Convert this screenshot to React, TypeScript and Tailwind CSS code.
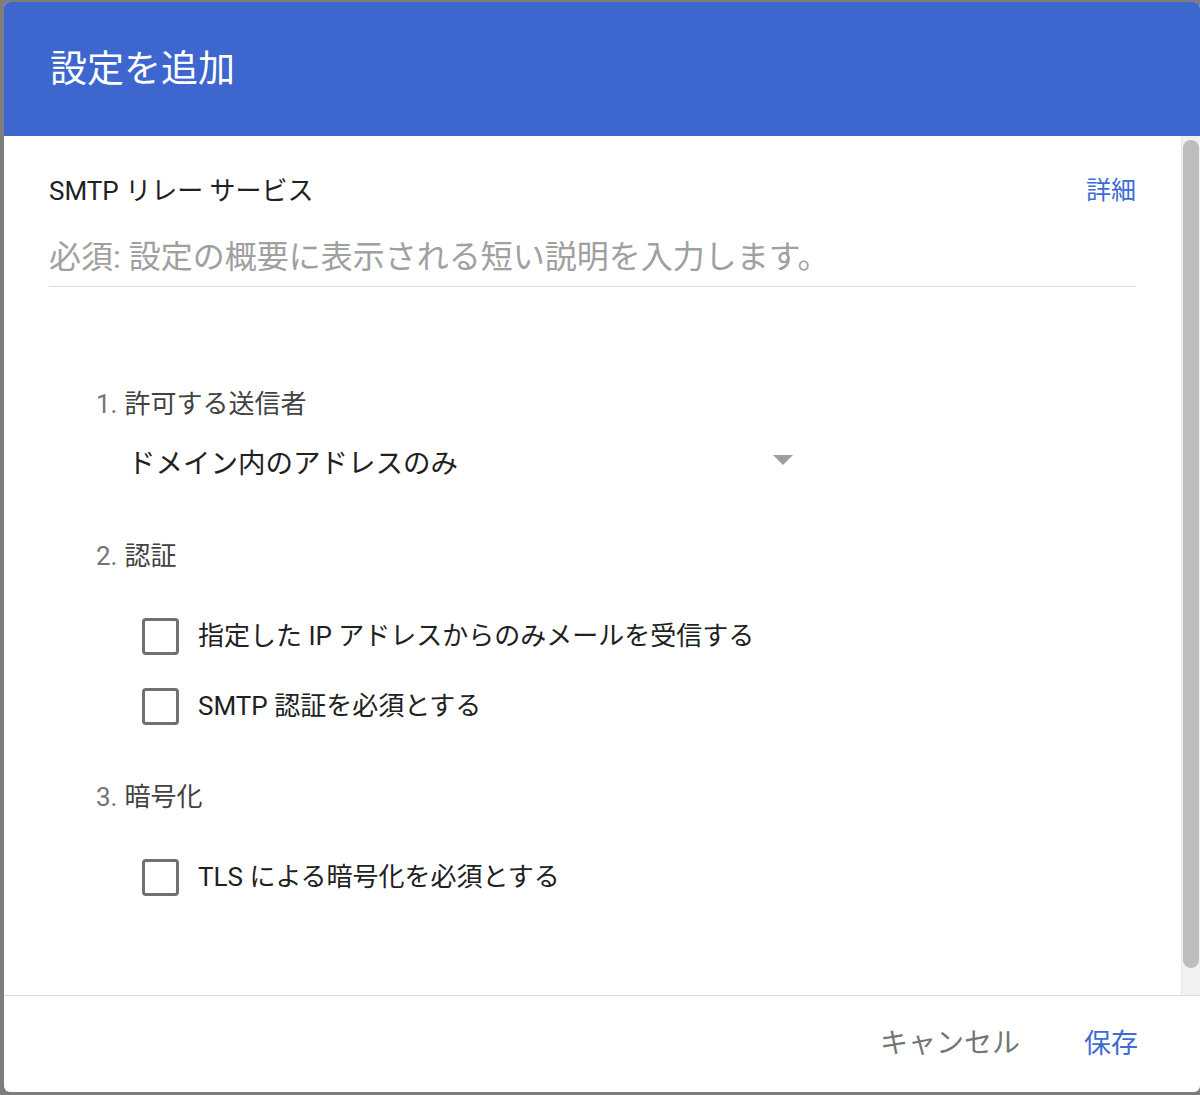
import React from 'react';

const Checkbox: React.FC<{ label: string; className?: string }> = ({ label, className }) => (
    <label className={`flex items-center h-10 ml-[93px] ${className ?? ''}`}>
        <span className="w-[37px] h-[37px] border-[3px] border-[#717171] rounded-[4px] shrink-0" />
        <span className="ml-[19px] text-[26px] leading-10 text-[#212121]">{label}</span>
    </label>
);

const SectionLabel: React.FC<{ num: string; text: string; className?: string }> = ({ num, text, className }) => (
    <div className={`h-8 flex items-center ml-[47px] text-[26px] leading-8 ${className ?? ''}`}>
        <span className="text-[#757575]">{num}</span>
        <span className="ml-[7px] text-[#424242]">{text}</span>
    </div>
);

export default function App() {
    return (
        <div className="w-[1200px] h-[1095px] bg-[#7d7d7d] pl-[4px] pt-[2px] pb-[3px] font-['Roboto','Noto_Sans_CJK_JP',sans-serif] overflow-hidden">
            <div className="h-full flex flex-col bg-white rounded-[6px] overflow-hidden">
                {/* header */}
                <div className="h-[134px] shrink-0 bg-[#3e66cf] flex items-center pl-[46px]">
                    <h1 className="text-[37px] leading-none text-white font-normal">設定を追加</h1>
                </div>

                {/* body */}
                <div className="flex flex-1 min-h-0">
                    <div className="flex-1 pl-[45px] pr-[45px] pt-[39px] flex flex-col">
                        <div className="flex justify-between items-center h-8">
                            <span className="text-[26px] text-[#212121]">SMTP リレー サービス</span>
                            <a className="text-[25px] text-[#3f6bd6]">詳細</a>
                        </div>
                        <div className="mt-[30px] h-[50px] pb-[9px] border-b border-[#dedede] flex items-center">
                            <span className="text-[32px] leading-10 text-[#a0a0a0]">必須: 設定の概要に表示される短い説明を入力します。</span>
                        </div>

                        <SectionLabel num="1." text="許可する送信者" className="mt-[101px]" />
                        <div className="mt-[26px] ml-[79px] w-[672px] h-9 flex items-center justify-between">
                            <span className="text-[27.5px] text-[#212121]">ドメイン内のアドレスのみ</span>
                            <span className="mr-[7px] -mt-[8px] w-0 h-0 border-l-[10px] border-r-[10px] border-t-[10px] border-l-transparent border-r-transparent border-t-[#9e9e9e]" />
                        </div>

                        <SectionLabel num="2." text="認証" className="mt-[58px]" />
                        <Checkbox label="指定した IP アドレスからのみメールを受信する" className="mt-[44px]" />
                        <Checkbox label="SMTP 認証を必須とする" className="mt-[30px]" />

                        <SectionLabel num="3." text="暗号化" className="mt-[55px]" />
                        <Checkbox label="TLS による暗号化を必須とする" className="mt-[44px]" />
                    </div>

                    {/* scrollbar */}
                    <div className="w-[19px] shrink-0 bg-[#f1f1f1] border-l border-[#e6e6e6] pt-[4px] pb-[27px] flex">
                        <div className="flex-1 bg-[#bdbdbd] rounded-full mx-[1px]" />
                    </div>
                </div>

                {/* footer */}
                <div className="h-[97px] shrink-0 border-t border-[#dcdcdc] flex items-center justify-end gap-[64px] pr-[62px]">
                    <button className="text-[28px] text-[#757575]">キャンセル</button>
                    <button className="text-[27px] text-[#3f6bd6]">保存</button>
                </div>
            </div>
        </div>
    );
}
